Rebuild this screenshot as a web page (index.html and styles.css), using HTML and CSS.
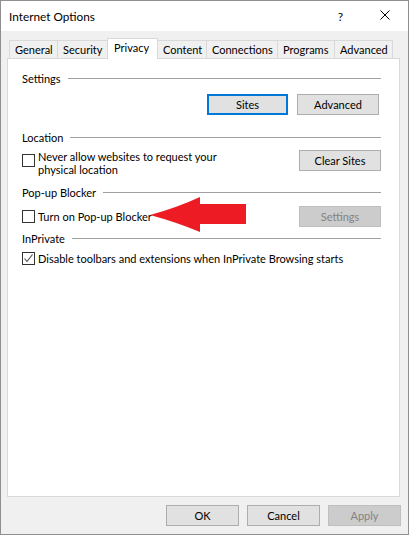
FILE: index.html
```html
<!DOCTYPE html>
<html lang="en">
<head>
<meta charset="utf-8">
<title>Internet Options</title>
<link rel="stylesheet" href="styles.css">
</head>
<body>
<div class="window">
  <div class="titlebar">
    <span class="title">Internet Options</span>
    <span class="help">?</span>
    <span class="close"><svg width="10" height="10" viewBox="0 0 10 10"><path d="M0.5 0.5 L9.5 9.5 M9.5 0.5 L0.5 9.5" stroke="#000" stroke-width="1" fill="none"/></svg></span>
  </div>
  <div class="main">
    <div class="tabs">
      <div class="tab t-general">General</div>
      <div class="tab t-security">Security</div>
      <div class="tab t-privacy selected">Privacy</div>
      <div class="tab t-content">Content</div>
      <div class="tab t-connections">Connections</div>
      <div class="tab t-programs">Programs</div>
      <div class="tab t-advanced">Advanced</div>
    </div>
    <div class="panel">
      <div class="group-head"><span>Settings</span><i class="rule"></i></div>
      <div class="btn-row">
        <button class="btn btn-default w81">Sites</button>
        <button class="btn w82">Advanced</button>
      </div>

      <div class="group-head gap-location"><span>Location</span><i class="rule"></i></div>
      <div class="check-row top">
        <span class="checkbox cb-top"></span>
        <span class="label two-line">Never allow websites to request your<br>physical location</span>
        <button class="btn w82">Clear Sites</button>
      </div>

      <div class="group-head gap-popup"><span>Pop-up Blocker</span><i class="rule"></i></div>
      <div class="check-row center tall">
        <span class="checkbox"></span>
        <span class="label">Turn on Pop-up Blocker</span>
        <button class="btn btn-disabled w82">Settings</button>
      </div>

      <div class="group-head gap-inprivate"><span>InPrivate</span><i class="rule"></i></div>
      <div class="check-row center short">
        <span class="checkbox checked"><svg width="11" height="11" viewBox="0 0 11 11"><path d="M1.5 5.5 L4 8.5 L9.5 1.5" stroke="#4a4a4a" stroke-width="1.1" fill="none"/></svg></span>
        <span class="label">Disable toolbars and extensions when InPrivate Browsing starts</span>
      </div>

      <svg class="arrow" width="100" height="38" viewBox="0 0 100 38">
        <path d="M2 20 Q28 13 52 2 L52 9 L98 9 L98 29 L52 29 L52 37 Q28 27 2 20 Z" fill="#ed1c24"/>
      </svg>
    </div>
    <div class="footer">
      <button class="btn w73">OK</button>
      <button class="btn w73">Cancel</button>
      <button class="btn btn-disabled w73">Apply</button>
    </div>
  </div>
</div>
</body>
</html>
```
FILE: styles.css
```css
* { box-sizing: border-box; }
html, body { margin: 0; padding: 0; background: #f0f0f0; }
body {
  font-family: Lato, "Noto Sans", sans-serif;
  font-size: 11px;
  color: #000;
}
.window {
  width: 409px;
  height: 535px;
  border: 1px solid #8f8f8f;
  background: #f0f0f0;
  overflow: hidden;
}
.titlebar {
  height: 30px;
  background: #fff;
  display: flex;
  align-items: center;
  padding-left: 8px;
}
.title { flex: 1; font-size: 11.8px; }
.help { font-size: 12px; margin-right: 37px; }
.close { display: flex; margin-right: 18px; margin-bottom: 2px; }

.main { padding: 7px 8px 0 6px; }

.tabs {
  display: flex;
  align-items: flex-end;
  margin-left: 2px;
  position: relative;
  z-index: 1;
}
.tab {
  height: 18px;
  border: 1px solid #d9d9d9;
  border-bottom: none;
  background: #f0f0f0;
  padding-left: 5px;
  line-height: 17px;
  white-space: nowrap;
  margin-left: -1px;
}
.tab:first-child { margin-left: 0; }
.tab.selected {
  height: 21px;
  background: #fff;
  margin-bottom: -1px;
  line-height: 17px;
  padding-left: 6px;
}
.t-general { width: 49px; }
.t-security { width: 51px; }
.t-privacy { width: 51px; }
.t-content { width: 50px; }
.t-connections { width: 72px; }
.t-programs { width: 58px; }
.t-advanced { width: 59px; }

.panel {
  position: relative;
  height: 439px;
  background: #fff;
  border: 1px solid #d9d9d9;
  padding: 12px 18px 0 14px;
}
.group-head {
  display: flex;
  align-items: center;
  height: 15px;
  line-height: 15px;
}
.rule {
  flex: 1;
  height: 0;
  border-top: 1px solid #a0a0a0;
  margin-left: 7px;
}
.gap-location { margin-top: 15px; }
.gap-popup { margin-top: 9px; }
.gap-inprivate { margin-top: 4px; }

.btn-row {
  margin-top: 8px;
  display: flex;
  justify-content: flex-end;
  gap: 9px;
  padding-right: 2px;
}
.btn {
  height: 21px;
  padding: 0;
  border: 1px solid #adadad;
  background: #e1e1e1;
  font-family: inherit;
  font-size: inherit;
  color: #000;
  line-height: 19px;
}
.btn-default { border: 2px solid #0078d7; line-height: 17px; }
.btn-disabled { background: #cccccc; border-color: #bfbfbf; color: #838383; }
.w73 { width: 73px; }
.w81 { width: 81px; }
.w82 { width: 82px; }

.check-row { display: flex; }
.check-row.top { margin-top: 5px; align-items: flex-start; }
.check-row.center { align-items: center; }
.check-row.tall { margin-top: 6px; height: 21px; }
.check-row.short { margin-top: 5px; height: 15px; }
.checkbox {
  width: 13px;
  height: 13px;
  border: 1px solid #333;
  background: #fff;
  flex: none;
  display: flex;
}
.cb-top { margin-top: 4px; }
.label {
  margin-left: 3px;
  flex: 1;
  white-space: nowrap;
}
.two-line { line-height: 13px; }

.arrow {
  position: absolute;
  left: 140px;
  top: 136px;
}

.footer {
  display: flex;
  justify-content: flex-end;
  gap: 8px;
  padding-top: 8px;
  margin-right: -1px;
}
```
